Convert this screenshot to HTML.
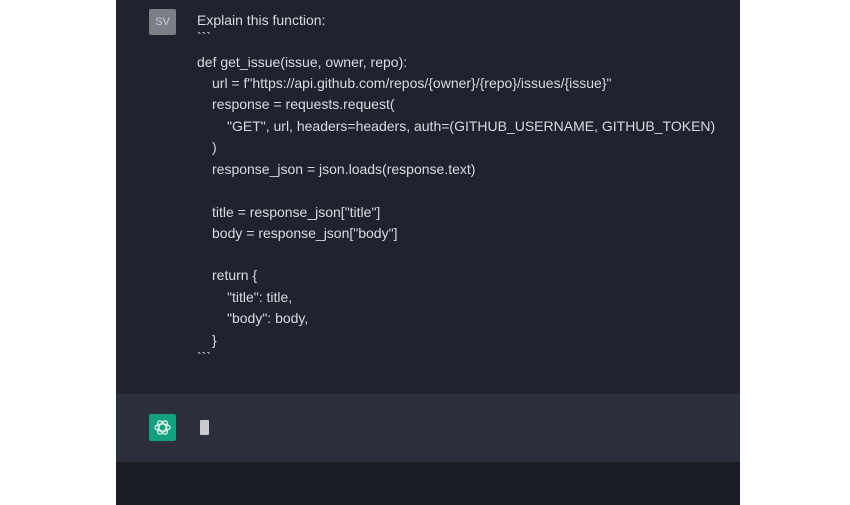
<!DOCTYPE html>
<html><head><style>
body{margin:0;width:850px;height:505px;background:#fff;position:relative;overflow:hidden;font-family:"Liberation Sans",sans-serif}
.p{position:absolute;left:116px;top:0;width:624px;height:505px;background:#1f2029}
.top{position:absolute;left:0;top:0;width:624px;height:394px;background:#202230}
.band{position:absolute;left:0;top:394px;width:624px;height:68px;background:#2c2f3e}
.bot{position:absolute;left:0;top:462px;width:624px;height:43px;background:#1b1d25}
.av{position:absolute;left:33px;top:9px;width:27px;height:26px;background:#7b7e85;color:#d0d2d6;font-size:11px;text-align:center;line-height:26px;border-radius:2px}
.t{position:absolute;color:#d9dbe0;font-size:14px;white-space:pre;line-height:16px}
.g{position:absolute;left:33px;top:414px;width:27px;height:27px;background:#12a07f;border-radius:2px}
.c{position:absolute;left:84px;top:420px;width:9px;height:15px;background:#c9cad0;border-radius:1px}
</style></head><body><div class="p">
<div class="top"></div><div class="band"></div><div class="bot"></div>
<div class="av">SV</div>
<div class="t" style="left:81px;top:12px">Explain this function:</div>
<div class="t" style="left:81px;top:29px">&#96;&#96;&#96;</div>
<div class="t" style="left:81px;top:54px">def get_issue(issue, owner, repo):</div>
<div class="t" style="left:96px;top:75px">url = f"https://api.github.com/repos/{owner}/{repo}/issues/{issue}"</div>
<div class="t" style="left:96px;top:96px">response = requests.request(</div>
<div class="t" style="left:111px;top:118px">"GET", url, headers=headers, auth=(GITHUB_USERNAME, GITHUB_TOKEN)</div>
<div class="t" style="left:96px;top:139px">)</div>
<div class="t" style="left:96px;top:161px">response_json = json.loads(response.text)</div>
<div class="t" style="left:96px;top:204px">title = response_json["title"]</div>
<div class="t" style="left:96px;top:225px">body = response_json["body"]</div>
<div class="t" style="left:96px;top:267px">return {</div>
<div class="t" style="left:111px;top:289px">"title": title,</div>
<div class="t" style="left:111px;top:310px">"body": body,</div>
<div class="t" style="left:96px;top:332px">}</div>
<div class="t" style="left:81px;top:349px">&#96;&#96;&#96;</div>
<div class="g"><svg width="27" height="27" viewBox="0 0 27 27"><g fill="none" stroke="#d8f0e8" stroke-width="1.3"><ellipse cx="13.5" cy="13.5" rx="7.5" ry="3.5"/><ellipse cx="13.5" cy="13.5" rx="7.5" ry="3.5" transform="rotate(60 13.5 13.5)"/><ellipse cx="13.5" cy="13.5" rx="7.5" ry="3.5" transform="rotate(120 13.5 13.5)"/></g></svg></div>
<div class="c"></div>
</div></body></html>
